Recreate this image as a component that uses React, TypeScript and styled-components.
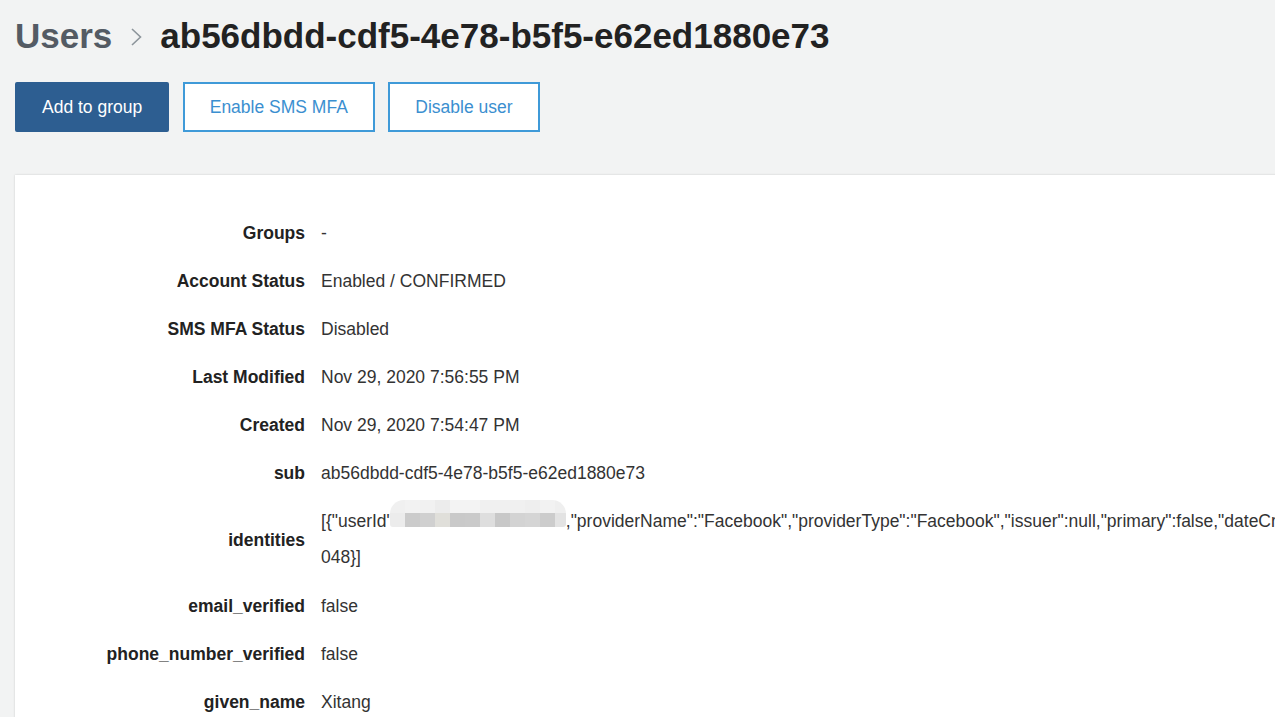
import React from "react";
import styled, { createGlobalStyle } from "styled-components";

const GlobalStyle = createGlobalStyle`
  html, body {
    margin: 0;
    padding: 0;
    background: #f2f3f3;
    overflow: hidden;
  }
  body {
    font-family: "Liberation Sans", Arial, sans-serif;
    color: #333;
  }
  * { box-sizing: border-box; }
`;

const Page = styled.div`
  padding: 15px 0 0 15px;
  width: max-content;
`;

const TitleBar = styled.h1`
  margin: 0;
  display: flex;
  align-items: center;
  gap: 17.5px;
  font-size: 35px;
  line-height: 42px;
  font-weight: 700;
  white-space: nowrap;
`;

const Crumb = styled.span`
  color: #545b64;
`;

const Current = styled.span`
  color: #222;
`;

const Chevron = styled.svg`
  width: 13px;
  height: 20px;
  flex: none;
  margin-top: 2px;
`;

const Toolbar = styled.div`
  display: flex;
  gap: 13.5px;
  margin-top: 25px;
`;

const Button = styled.button<{ $primary?: boolean }>`
  height: 50px;
  padding: 0 25px;
  font-family: "Liberation Sans", Arial, sans-serif;
  font-size: 17.5px;
  cursor: pointer;
  border: 2px solid ${(p) => (p.$primary ? "#2d5e91" : "#3f9ad8")};
  background: ${(p) => (p.$primary ? "#2d5e91" : "#ffffff")};
  color: ${(p) => (p.$primary ? "#ffffff" : "#3b8fd0")};
  border-radius: ${(p) => (p.$primary ? "2px" : "0")};
`;

const Card = styled.section`
  margin-top: 43px;
  background: #fff;
  box-shadow: 0 0 2px rgba(0, 0, 0, 0.16);
  padding: 34px 0 40px 0;
`;

const Grid = styled.dl`
  margin: 0;
  display: grid;
  grid-template-columns: 290px 1113px;
  column-gap: 16px;
  font-size: 17.5px;
  line-height: 36px;
`;

const Label = styled.dt`
  margin: 0;
  padding: 6px 0;
  text-align: right;
  font-weight: 700;
  color: #222;
  align-self: center;
  white-space: nowrap;
`;

const Value = styled.dd<{ $multiline?: boolean }>`
  margin: 0;
  padding: 6px 0 ${(p) => (p.$multiline ? "7px" : "6px")};
  color: #333;
  align-self: center;
  word-break: break-all;
`;

const Redacted = styled.span`
  display: inline-block;
  width: 176px;
  height: 27px;
  margin-left: -3px;
  vertical-align: top;
  transform: translateY(-3px);
  border-radius: 14px 14px 3px 3px;
  background:
    linear-gradient(
        to right,
        #ececec 0 15px,
        #cbcbcb 15px 30px,
        #d0d0d0 30px 45px,
        #e0dfda 45px 60px,
        #c9c9c9 60px 75px,
        #cacaca 75px 90px,
        #dedede 90px 105px,
        #c8c8c8 105px 120px,
        #d3d3d3 120px 135px,
        #d5d5d5 135px 150px,
        #cccccc 150px 165px,
        #e3e3e3 165px 176px
      )
      left bottom / 100% 14px no-repeat,
    linear-gradient(
      to right,
      #f0f0f0 0 15px,
      #f2f2f2 15px 30px,
      #f1f1f1 30px 45px,
      #ececec 45px 60px,
      #f3f3f3 60px 90px,
      #f0f0f0 90px 135px,
      #eeeeee 135px 150px,
      #f2f2f2 150px 165px,
      #efefef 165px 176px
    );
`;

type Row = { label: string; value: React.ReactNode; multiline?: boolean };

const rows: Row[] = [
  { label: "Groups", value: "-" },
  { label: "Account Status", value: "Enabled / CONFIRMED" },
  { label: "SMS MFA Status", value: "Disabled" },
  { label: "Last Modified", value: "Nov 29, 2020 7:56:55 PM" },
  { label: "Created", value: "Nov 29, 2020 7:54:47 PM" },
  { label: "sub", value: "ab56dbdd-cdf5-4e78-b5f5-e62ed1880e73" },
  {
    label: "identities",
    multiline: true,
    value: (
      <>
        [{'{'}"userId"
        <Redacted aria-label="redacted" />
        ,"providerName":"Facebook","providerType":"Facebook","issuer":null,"primary":false,"dateCreated":1606650887048{'}'}]
      </>
    ),
  },
  { label: "email_verified", value: "false" },
  { label: "phone_number_verified", value: "false" },
  { label: "given_name", value: "Xitang" },
  { label: "family_name", value: "-" },
];

export default function App() {
  return (
    <>
      <GlobalStyle />
      <Page>
        <TitleBar>
          <Crumb>Users</Crumb>
          <Chevron viewBox="0 0 13 20" aria-hidden="true">
            <path d="M2 2 L10.5 10 L2 18" fill="none" stroke="#8d959b" strokeWidth="1.6" />
          </Chevron>
          <Current>ab56dbdd-cdf5-4e78-b5f5-e62ed1880e73</Current>
        </TitleBar>
        <Toolbar>
          <Button $primary>Add to group</Button>
          <Button>Enable SMS MFA</Button>
          <Button>Disable user</Button>
        </Toolbar>
        <Card>
          <Grid>
            {rows.map((r) => (
              <React.Fragment key={r.label}>
                <Label>{r.label}</Label>
                <Value $multiline={r.multiline}>{r.value}</Value>
              </React.Fragment>
            ))}
          </Grid>
        </Card>
      </Page>
    </>
  );
}
